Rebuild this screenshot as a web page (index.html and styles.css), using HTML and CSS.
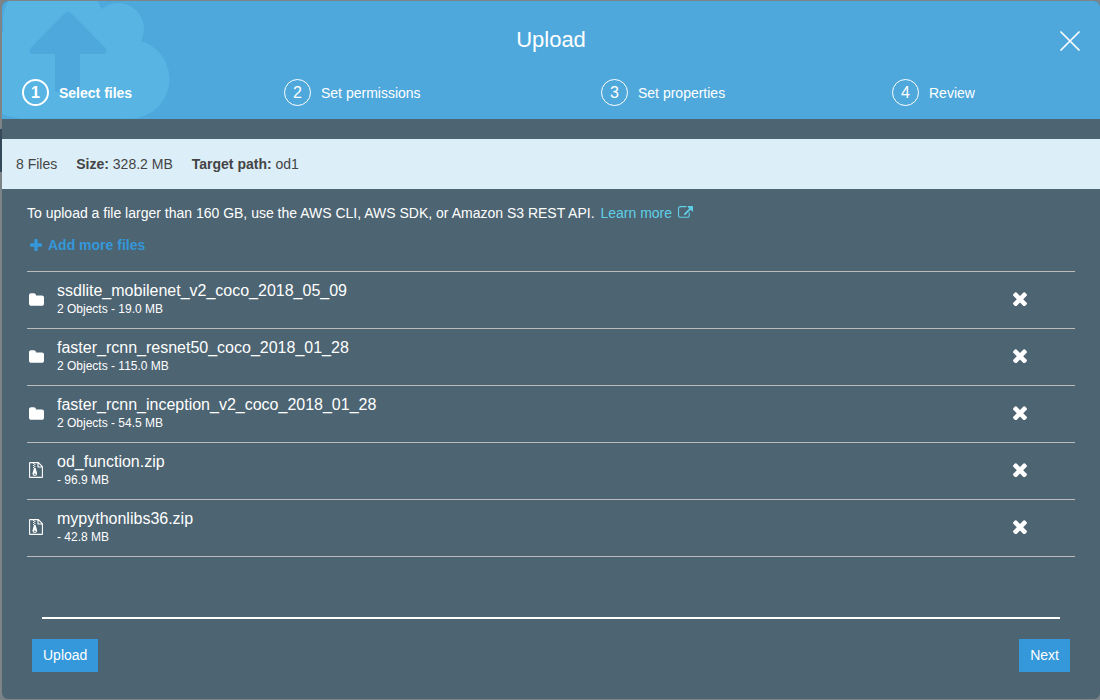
FILE: index.html
```html
<!DOCTYPE html>
<html lang="en">
<head>
<meta charset="UTF-8">
<meta name="viewport" content="width=device-width, initial-scale=1.0">
<title>Upload</title>
<link rel="stylesheet" href="styles.css">
</head>
<body>

<!-- shared icons -->
<svg class="sprite" aria-hidden="true">
  <symbol id="icon-folder" viewBox="0 0 1664 1408">
    <path d="M1664 480v704q0 92-66 158t-158 66h-1216q-92 0-158-66t-66-158v-960q0-92 66-158t158-66h320q92 0 158 66t66 158v32h672q92 0 158 66t66 158z"/>
  </symbol>
  <symbol id="icon-zip" viewBox="0 0 14 16">
    <path fill="none" stroke="currentColor" stroke-width="1.1" stroke-linejoin="round" d="M.6 1q0-.4.4-.4h8.400l4 4V15q0 .4-.4.4H1q-.4 0-.4-.4zM9 .6V5h4.400"/>
    <path d="M4 1h1.200v1H4zM5.200 2h1.200v1H5.200zM4 3h1.200v1H4zM5.200 4h1.200v1H5.200zM4 5h1.200v1H4zM5 6h1.600l1.500 5.200c.6 3.400-5.200 3.400-4.600 0z"/>
    <ellipse cx="5.800" cy="12.200" rx="1.100" ry=".6" fill="#4d6472"/>
  </symbol>
  <symbol id="icon-remove" viewBox="302 302 1188 1188">
    <path d="M1490 1322q0 40-28 68l-136 136q-28 28-68 28t-68-28l-294-294-294 294q-28 28-68 28t-68-28l-136-136q-28-28-28-68t28-68l294-294-294-294q-28-28-28-68t28-68l136-136q28-28 68-28t68 28l294 294 294-294q28-28 68-28t68 28l136 136q28 28 28 68t-28 68l-294 294 294 294q28 28 28 68z" transform="translate(0 -42)"/>
  </symbol>
</svg>

<div class="modal" role="dialog" aria-labelledby="title">
  <header class="header">
    <svg class="cloud" viewBox="0 0 170 118" aria-hidden="true">
      <g fill="#57b4e3">
        <circle cx="51" cy="22" r="50"/>
        <circle cx="116" cy="28" r="26"/>
        <circle cx="128" cy="78" r="39.500"/>
        <circle cx="19" cy="72" r="45"/>
        <path d="M19 40h109v77.500H19z"/>
      </g>
      <path fill="#4ea8dc" d="M62.500 12.500q3.500-3.500 7 0l33.500 34q2.500 3 .5 5t-4 1.500H78V89q0 2-2 2H55q-2 0-2-2V53H31q-3 0-3.500-2t1.500-4.500z"/>
    </svg>
    <h1 class="title" id="title">Upload</h1>
    <button class="close" type="button" aria-label="Close">
      <svg viewBox="0 0 20 20"><path d="M1 1l18 18M19 1L1 19"/></svg>
    </button>
    <ol class="steps">
      <li class="step active"><span class="number">1</span>Select files</li>
      <li class="step"><span class="number">2</span>Set permissions</li>
      <li class="step"><span class="number">3</span>Set properties</li>
      <li class="step"><span class="number">4</span>Review</li>
    </ol>
  </header>

  <div class="summary">
    <span>8 Files</span>
    <span><b>Size:</b> 328.2 MB</span>
    <span><b>Target path:</b> od1</span>
  </div>

  <main class="content">
    <p class="hint">To upload a file larger than 160 GB, use the AWS CLI, AWS SDK, or Amazon S3 REST API.
      <a href="#">Learn more<svg class="external" viewBox="0 0 1792 1536" aria-hidden="true"><path d="M1408 800v320q0 119-84.500 203.500t-203.500 84.500h-832q-119 0-203.500-84.500t-84.500-203.500v-832q0-119 84.500-203.500t203.500-84.500h704q14 0 23 9t9 23v64q0 14-9 23t-23 9h-704q-66 0-113 47t-47 113v832q0 66 47 113t113 47h832q66 0 113-47t47-113v-320q0-14 9-23t23-9h64q14 0 23 9t9 23zM1792 64v512q0 26-19 45t-45 19-45-19l-176-176-652 652q-10 10-23 10t-23-10l-114-114q-10-10-10-23t10-23l652-652-176-176q-19-19-19-45t19-45 45-19h512q26 0 45 19t19 45z"/></svg></a>
    </p>
    <button class="add" type="button">
      <svg viewBox="192 128 1408 1408" aria-hidden="true"><path d="M1600 736v192q0 40-28 68t-68 28h-416v416q0 40-28 68t-68 28h-192q-40 0-68-28t-28-68v-416h-416q-40 0-68-28t-28-68v-192q0-40 28-68t68-28h416v-416q0-40 28-68t68-28h192q40 0 68 28t28 68v416h416q40 0 68 28t28 68z"/></svg>Add more files
    </button>

    <ul class="files">
      <li class="file">
        <svg class="file-icon folder" aria-hidden="true"><use href="#icon-folder"/></svg>
        <div class="info">
          <div class="name">ssdlite_mobilenet_v2_coco_2018_05_09</div>
          <div class="meta">2 Objects - 19.0 MB</div>
        </div>
        <button class="remove" type="button" aria-label="Remove"><svg><use href="#icon-remove"/></svg></button>
      </li>
      <li class="file">
        <svg class="file-icon folder" aria-hidden="true"><use href="#icon-folder"/></svg>
        <div class="info">
          <div class="name">faster_rcnn_resnet50_coco_2018_01_28</div>
          <div class="meta">2 Objects - 115.0 MB</div>
        </div>
        <button class="remove" type="button" aria-label="Remove"><svg><use href="#icon-remove"/></svg></button>
      </li>
      <li class="file">
        <svg class="file-icon folder" aria-hidden="true"><use href="#icon-folder"/></svg>
        <div class="info">
          <div class="name">faster_rcnn_inception_v2_coco_2018_01_28</div>
          <div class="meta">2 Objects - 54.5 MB</div>
        </div>
        <button class="remove" type="button" aria-label="Remove"><svg><use href="#icon-remove"/></svg></button>
      </li>
      <li class="file">
        <svg class="file-icon" aria-hidden="true"><use href="#icon-zip"/></svg>
        <div class="info">
          <div class="name">od_function.zip</div>
          <div class="meta">- 96.9 MB</div>
        </div>
        <button class="remove" type="button" aria-label="Remove"><svg><use href="#icon-remove"/></svg></button>
      </li>
      <li class="file">
        <svg class="file-icon" aria-hidden="true"><use href="#icon-zip"/></svg>
        <div class="info">
          <div class="name">mypythonlibs36.zip</div>
          <div class="meta">- 42.8 MB</div>
        </div>
        <button class="remove" type="button" aria-label="Remove"><svg><use href="#icon-remove"/></svg></button>
      </li>
    </ul>
  </main>

  <footer class="footer">
    <button class="button" type="button">Upload</button>
    <button class="button" type="button">Next</button>
  </footer>
</div>

</body>
</html>
```
FILE: styles.css
```css
* {
  box-sizing: border-box;
}

body {
  display: flex;
  min-height: 100vh;
  margin: 0;
  padding: 1px 0 1px 2px;
  background: linear-gradient(#7c8488 129px, #34495a 129px, #34495a 172px, #7c8488 172px);
  color: #fff;
  font-family: "Liberation Sans", Arial, sans-serif;
  font-size: 14px;
  line-height: 20px;
}

button {
  padding: 0;
  border: none;
  background: none;
  color: inherit;
  font: inherit;
  cursor: pointer;
}

svg {
  display: block;
  fill: currentColor;
}

ul, ol {
  margin: 0;
  padding: 0;
  list-style: none;
}

.sprite {
  position: absolute;
  width: 0;
  height: 0;
}

.modal {
  display: flex;
  flex: 1;
  flex-direction: column;
  overflow: hidden;
  border-radius: 6px;
  background-color: #4d6472;
}

/* Header */
.header {
  position: relative;
  padding: 24px 0 12px 20px;
  background-color: #4ea8dc;
}

.cloud {
  position: absolute;
  top: 0;
  left: 0;
  width: 170px;
  height: 118px;
}

.title {
  margin: 0 20px 23px 0;
  font-size: 22px;
  font-weight: normal;
  line-height: 30px;
  text-align: center;
}

.close {
  position: absolute;
  top: 30px;
  right: 20px;
}

.close svg {
  width: 20px;
  height: 20px;
  stroke: #fff;
  stroke-width: 1.7;
  stroke-linecap: round;
}

.steps {
  position: relative;
  display: grid;
  grid-template-columns: 262fr 317fr 291fr 208fr;
}

.step {
  display: flex;
  align-items: center;
  gap: 10px;
  height: 29px;
}

.step.active {
  font-weight: bold;
}

.number {
  display: flex;
  justify-content: center;
  align-items: center;
  width: 27px;
  height: 27px;
  padding-top: 1px;
  border: 1px solid #fff;
  border-radius: 50%;
  font-size: 16px;
}

.active .number {
  border-width: 2px;
}

/* Summary bar */
.summary {
  display: flex;
  gap: 19px;
  margin-top: 20px;
  padding: 15px 14px;
  background-color: #dceef8;
  color: #444;
}

/* File list */
.content {
  flex: 1;
  padding: 14px 25px 0;
}

.hint {
  margin: 0 0 12px;
}

.hint a {
  margin-left: 2px;
  color: #5fd0e8;
  text-decoration: none;
}

.external {
  display: inline-block;
  width: 15px;
  height: 13px;
  margin-left: 6px;
  vertical-align: -1px;
}

.add {
  display: flex;
  align-items: center;
  gap: 6px;
  margin-left: 3px;
  color: #3498db;
  font-weight: bold;
}

.add svg {
  width: 12px;
  height: 12px;
}

.files {
  margin-top: 16px;
  border-top: 1px solid #bbb;
}

.file {
  display: flex;
  align-items: center;
  height: 57px;
  padding: 0 48px 2px 2px;
  border-bottom: 1px solid #bbb;
}

.file-icon {
  width: 14px;
  height: 16px;
  margin-right: 14px;
}

.file-icon.folder {
  width: 15px;
  height: 13px;
  margin-right: 13px;
}

.info {
  flex: 1;
}

.name {
  font-size: 16px;
}

.meta {
  font-size: 12px;
  line-height: 16px;
}

.remove svg {
  width: 14px;
  height: 14px;
}

/* Footer */
.footer {
  display: flex;
  justify-content: space-between;
  margin: 0 40px;
  padding: 20px 0 27px;
  border-top: 2px solid #fff;
}

.button {
  height: 33px;
  padding: 0 11px 1px;
  background-color: #3498db;
}

.button:first-child {
  margin-left: -10px;
}

.button:last-child {
  margin-right: -10px;
}
```
